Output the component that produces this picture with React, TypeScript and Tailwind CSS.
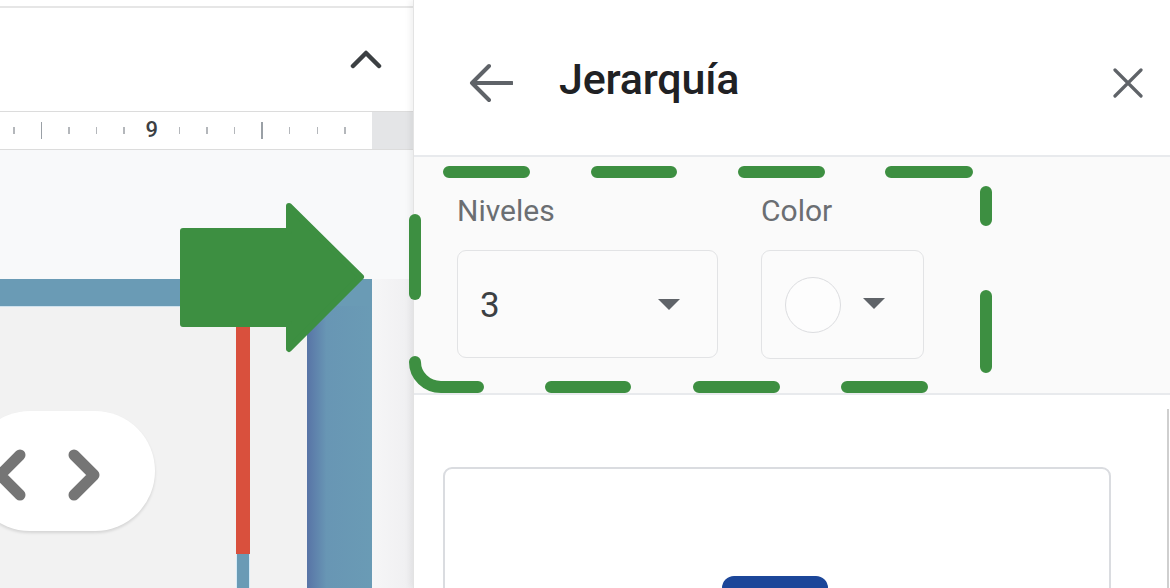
import React from "react";

const G = "#3d8f41";

function Ruler() {
  const cells = Array.from({ length: 13 }, (_, i) => i);
  return (
    <div className="h-[39px] flex border-y border-[#dcdcdc]">
      <div className="w-[372px] bg-white flex items-center">
        {cells.map((i) => (
          <div key={i} className="w-[27.6px] h-full flex items-center justify-center shrink-0">
            {i === 5 ? (
              <span className="text-[22px] leading-none text-[#3c4043] font-medium">9</span>
            ) : i === 1 || i === 9 ? (
              <div className="w-[1.5px] h-[17px] bg-[#9aa0a6]" />
            ) : (
              <div className="w-[1.5px] h-[7px] bg-[#b4b7bb]" />
            )}
          </div>
        ))}
      </div>
      <div className="flex-1 bg-[#e4e5e7]" />
    </div>
  );
}

function LeftPanel() {
  return (
    <div className="w-[413px] shrink-0 flex flex-col h-full">
      <div className="h-[6px] bg-white" />
      <div className="h-[1.5px] bg-[#e6e6e6]" />
      <div className="h-[103px] bg-white flex items-center justify-end pr-[31px]">
        <svg width="32" height="20" viewBox="0 0 32 20">
          <path d="M3 17 L16 4 L29 17" fill="none" stroke="#3c4043" strokeWidth="4.5" strokeLinecap="round" strokeLinejoin="round" />
        </svg>
      </div>
      <Ruler />
      <div className="flex-1 bg-[#f8f9fa] pt-[129px] flex min-h-0">
        <div className="w-[372px] bg-[#6a9bb5] flex">
          <div className="flex-1 flex flex-col pt-[27px]">
            <div className="flex-1 bg-[#f2f2f2] border-t border-[#cfe2ee] flex items-start overflow-hidden">
              <div className="-ml-[30px] mt-[104px] w-[185px] h-[120px] rounded-full bg-white shadow-[0_2px_3px_rgba(0,0,0,0.12)] shrink-0">
                <svg width="185" height="120" viewBox="0 0 185 120">
                  <path d="M50 44 L30 64 L50 84" fill="none" stroke="#757575" strokeWidth="11" strokeLinecap="round" strokeLinejoin="round" />
                  <path d="M104 44 L124 64 L104 84" fill="none" stroke="#757575" strokeWidth="11" strokeLinecap="round" strokeLinejoin="round" />
                </svg>
              </div>
              <div className="ml-[81px] w-[14px] self-stretch flex flex-col shrink-0">
                <div className="h-[247px] bg-[#d9503d]" />
                <div className="flex-1 bg-[#6a9bb5] border-x border-[#d6ecf8]" />
              </div>
            </div>
          </div>
          <div className="w-[65px] flex flex-col pt-[27px]">
            <div className="flex-1 bg-gradient-to-r from-[#5874a6] via-[#6896b4] via-30% to-[#6a9bb5]" />
          </div>
        </div>
        <div className="flex-1 bg-gradient-to-r from-[#f6f6f7] to-[#efeff1]" />
      </div>
    </div>
  );
}

function Caret() {
  return (
    <svg width="22" height="11" viewBox="0 0 22 11">
      <path d="M0 0 L22 0 L11 11 Z" fill="#5f6368" />
    </svg>
  );
}

function RightPanel() {
  return (
    <div className="flex-1 flex flex-col h-full bg-white border-l border-[#e3e3e3] shadow-[-3px_0_6px_rgba(0,0,0,0.06)] relative">
      <div className="h-[157px] shrink-0 flex items-center pt-[10px] pl-[55px] pr-[27px] border-b-2 border-[#e8eaed]">
        <svg width="44" height="40" viewBox="0 0 44 40">
          <path d="M20 3 L3 20 L20 37 M3 20 L43 20" fill="none" stroke="#5f6368" strokeWidth="4" strokeLinecap="round" strokeLinejoin="round" />
        </svg>
        <span className="ml-[46px] mb-[6px] text-[43px] leading-none font-medium text-[#202124] tracking-[-0.2px]">Jerarquía</span>
        <div className="flex-1" />
        <svg width="30" height="30" viewBox="0 0 30 30">
          <path d="M2 2 L28 28 M28 2 L2 28" fill="none" stroke="#5f6368" strokeWidth="3.2" strokeLinecap="round" />
        </svg>
      </div>
      <div className="h-[238px] shrink-0 bg-[#fafafa] border-b-2 border-[#e8eaed] pl-[43px] pt-[39px] flex gap-[43px]">
        <div className="w-[261px] flex flex-col">
          <div className="text-[30px] leading-[30px] text-[#6b6e72]">Niveles</div>
          <div className="mt-[24px] h-[108px] border-[1.5px] border-[#e2e3e5] rounded-[9px] bg-[#fbfbfb] flex items-center pl-[22px] pr-[37px]">
            <span className="text-[35px] leading-none text-[#3c4043] mt-[2px]">3</span>
            <div className="flex-1" />
            <Caret />
          </div>
        </div>
        <div className="w-[163px] flex flex-col">
          <div className="text-[30px] leading-[30px] text-[#6b6e72]">Color</div>
          <div className="mt-[24px] h-[109px] border-[1.5px] border-[#e2e3e5] rounded-[9px] bg-[#fbfbfb] flex items-center pl-[23px]">
            <div className="w-[56px] h-[56px] rounded-full border border-[#dcdde0] bg-[#fdfdfd]" />
            <div className="ml-[22px] -mt-[3px]">
              <Caret />
            </div>
          </div>
        </div>
      </div>
      <div className="flex-1 flex min-h-0">
        <div className="flex-1 pl-[29px] pt-[72px] overflow-hidden">
          <div className="w-[668px] h-[200px] border-2 border-[#dadce0] rounded-[9px] bg-white flex pl-[277px]">
            <div className="mt-[107px] w-[106px] h-[60px] rounded-[12px] bg-[#1c4699]" />
          </div>
        </div>
        <div className="w-[3px] pt-[14px] flex">
          <div className="w-[1.5px] bg-[#cfcfcf]" />
        </div>
      </div>
    </div>
  );
}

function Overlay() {
  const dash = { fill: "none", stroke: G, strokeWidth: 12, strokeLinecap: "round" as const };
  return (
    <svg className="absolute inset-0 pointer-events-none" width="1170" height="588" viewBox="0 0 1170 588">
      <path d="M183 231 H289 V206 L361 277 L289 349 V324 H183 Z" fill={G} stroke={G} strokeWidth="6" strokeLinejoin="round" />
      <path d="M449 172 H524 M597 172 H671 M744 172 H819 M891 172 H967" {...dash} />
      <path d="M986 192 V220 M986 296 V367" {...dash} />
      <path d="M415 220 V294" {...dash} />
      <path d="M551 387 H625 M699 387 H774 M847 387 H922" {...dash} />
      <path d="M415 362 A26 25 0 0 0 441 387 H478" {...dash} />
    </svg>
  );
}

export default function App() {
  return (
    <div className="w-[1170px] h-[588px] overflow-hidden relative flex bg-white font-['Roboto','Noto_Sans',sans-serif]">
      <LeftPanel />
      <RightPanel />
      <Overlay />
    </div>
  );
}
